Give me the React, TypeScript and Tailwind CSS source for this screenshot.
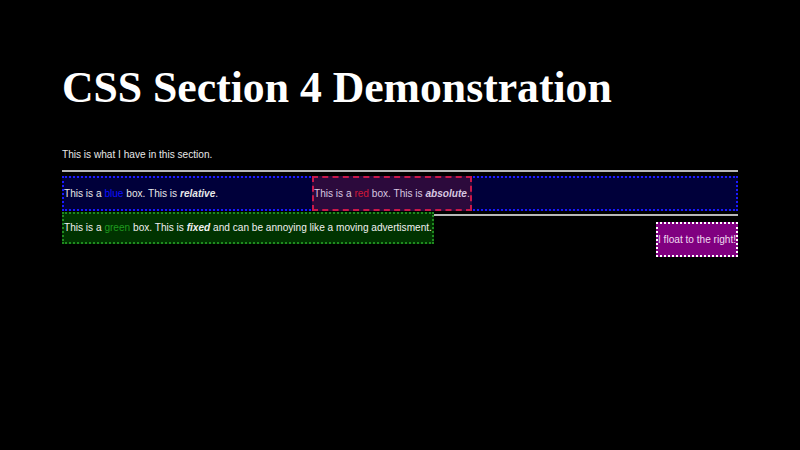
export default function App() {
  return (
    <div className="min-h-[450px] bg-black px-[62px] pt-[62px] font-['Liberation_Sans',Arial,sans-serif] text-[10.1px] text-[#e8e8e8]">
      <h1 className="font-['Liberation_Serif','Times_New_Roman',serif] text-[43.7px] font-bold leading-[50px] text-white">
        CSS Section 4 Demonstration
      </h1>
      <p className="mt-[37px] leading-[12px]">This is what I have in this section.</p>
      <div className="mt-[9px] h-[2px] bg-[#b8b8b8]" />
      <div className="relative mt-[4px] flex h-[35px] items-center border-2 border-dotted border-[#1a1aff] bg-[#00003a]">
        <span>
          This is a <span className="text-[#1010ff]">blue</span> box. This is{" "}
          <b className="italic">relative</b>.
        </span>
        <div className="absolute -top-[2px] left-[248px] flex h-[35px] items-center border-2 border-dashed border-[#c8184a] bg-[#2c0a3c] text-[#d8c8e0]">
          <span>
            This is a <span className="text-[#d01838]">red</span> box. This is{" "}
            <b className="italic">absolute</b>.
          </span>
        </div>
      </div>
      <div className="mt-[3px] h-[2px] bg-[#b8b8b8]" />
      <div className="mt-[6px] flex justify-end">
        <div className="flex h-[35px] items-center border-2 border-dotted border-white bg-[#800080] text-[#f0dcf0]">
          I float to the right!
        </div>
      </div>
      <div className="fixed left-[62px] top-[212px] flex h-[32px] items-center border-2 border-dotted border-[#1f8a1f] bg-[#003300] text-[#f0f0f0]">
        <span>
          This is a <span className="text-[#1f9a1f]">green</span> box. This is{" "}
          <b className="italic">fixed</b> and can be annoying like a moving advertisment.
        </span>
      </div>
    </div>
  );
}
